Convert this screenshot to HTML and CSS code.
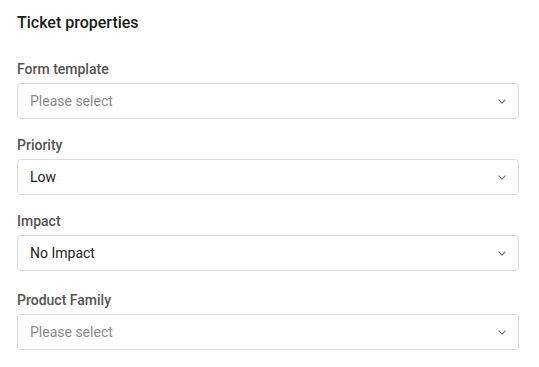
FILE: index.html
```html
<!DOCTYPE html>
<html lang="en">
<head>
    <meta charset="UTF-8">
    <meta name="viewport" content="width=device-width, initial-scale=1.0">
    <title>Ticket properties</title>
    <link rel="stylesheet" href="styles.css">
</head>
<body>
    <div class="panel">
        <h2 class="panel-title">Ticket properties</h2>

        <!-- Form template -->
        <div class="field">
            <label class="field-label">Form template</label>
            <div class="select placeholder">
                <span>Please select</span>
                <svg class="chevron" viewBox="0 0 10 6"><path d="M1 1l4 4 4-4"/></svg>
            </div>
        </div>

        <!-- Priority -->
        <div class="field">
            <label class="field-label">Priority</label>
            <div class="select">
                <span>Low</span>
                <svg class="chevron" viewBox="0 0 10 6"><path d="M1 1l4 4 4-4"/></svg>
            </div>
        </div>

        <!-- Impact -->
        <div class="field">
            <label class="field-label">Impact</label>
            <div class="select">
                <span>No Impact</span>
                <svg class="chevron" viewBox="0 0 10 6"><path d="M1 1l4 4 4-4"/></svg>
            </div>
        </div>

        <!-- Product Family -->
        <div class="field field-last">
            <label class="field-label">Product Family</label>
            <div class="select placeholder">
                <span>Please select</span>
                <svg class="chevron" viewBox="0 0 10 6"><path d="M1 1l4 4 4-4"/></svg>
            </div>
        </div>
    </div>
</body>
</html>
```

FILE: styles.css
```css
body {
    margin: 0;
    background: #ffffff;
    font-family: Roboto, 'Liberation Sans', sans-serif;
    color: #222222;
}

.panel {
    padding: 13px 20px 0 17px;
    display: flex;
    flex-direction: column;
}

.panel-title {
    font-size: 16px;
    font-weight: 500;
    line-height: 20px;
    margin: 0 0 27px;
    color: #1a1a1a;
}

.field {
    display: flex;
    flex-direction: column;
    gap: 5px;
    margin-bottom: 17px;
}

.field-last {
    margin-top: 3px;
}

.field-label {
    font-size: 14px;
    font-weight: 500;
    line-height: 18px;
    color: #555555;
}

.select {
    display: flex;
    align-items: center;
    justify-content: space-between;
    height: 36px;
    box-sizing: border-box;
    border: 1px solid #dcdcdc;
    border-radius: 4px;
    padding: 0 12px 0 12px;
    font-size: 14px;
    color: #222222;
}

.select.placeholder {
    color: #8a8a8a;
}

.chevron {
    width: 8px;
    height: 5px;
    fill: none;
    stroke: #707070;
    stroke-width: 1.3;
    stroke-linecap: round;
    stroke-linejoin: round;
}
```
